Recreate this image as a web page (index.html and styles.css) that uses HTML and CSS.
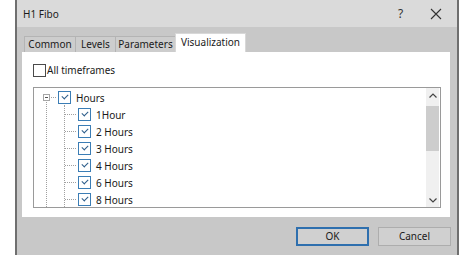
FILE: index.html
```html
<!DOCTYPE html>
<html lang="en">
<head>
    <meta charset="UTF-8">
    <title>H1 Fibo</title>
    <link rel="stylesheet" href="styles.css">
</head>
<body>
    <div class="window">
        <div class="titlebar">
            <span class="title">H1 Fibo</span>
            <span class="help">?</span>
            <span class="close">
                <svg width="12" height="12" viewBox="0 0 12 12"><path d="M1 1 L11 11 M11 1 L1 11" stroke="#333" stroke-width="1.1" fill="none"/></svg>
            </span>
        </div>
        <div class="content">
            <div class="tabs">
                <div class="tab tab-common">Common</div>
                <div class="tab tab-levels">Levels</div>
                <div class="tab tab-params">Parameters</div>
                <div class="tab tab-active">Visualization</div>
            </div>
            <div class="panel">
                <label class="check-row">
                    <span class="box"></span>
                    All timeframes
                </label>
                <div class="tree">
                    <div class="tree-items">
                        <div class="vline vline-root"></div>
                        <div class="vline vline-child"></div>
                        <div class="node node-root">
                            <span class="expander"><span class="minus"></span></span>
                            <span class="hline hline-root"></span>
                            <span class="box checked"></span>
                            <span class="node-text">Hours</span>
                        </div>
                        <div class="node node-child">
                            <span class="hline"></span>
                            <span class="box checked"></span>
                            <span class="node-text">1Hour</span>
                        </div>
                        <div class="node node-child">
                            <span class="hline"></span>
                            <span class="box checked"></span>
                            <span class="node-text">2 Hours</span>
                        </div>
                        <div class="node node-child">
                            <span class="hline"></span>
                            <span class="box checked"></span>
                            <span class="node-text">3 Hours</span>
                        </div>
                        <div class="node node-child">
                            <span class="hline"></span>
                            <span class="box checked"></span>
                            <span class="node-text">4 Hours</span>
                        </div>
                        <div class="node node-child">
                            <span class="hline"></span>
                            <span class="box checked"></span>
                            <span class="node-text">6 Hours</span>
                        </div>
                        <div class="node node-child">
                            <span class="hline"></span>
                            <span class="box checked"></span>
                            <span class="node-text">8 Hours</span>
                        </div>
                    </div>
                    <div class="scrollbar">
                        <div class="arrow">
                            <svg width="8" height="5" viewBox="0 0 8 5"><path d="M0.5 4.5 L4 1 L7.5 4.5" stroke="#444" stroke-width="1.2" fill="none"/></svg>
                        </div>
                        <div class="track">
                            <div class="thumb"></div>
                        </div>
                        <div class="arrow">
                            <svg width="8" height="5" viewBox="0 0 8 5"><path d="M0.5 0.5 L4 4 L7.5 0.5" stroke="#444" stroke-width="1.2" fill="none"/></svg>
                        </div>
                    </div>
                </div>
            </div>
            <div class="buttons">
                <div class="button button-default">OK</div>
                <div class="button">Cancel</div>
            </div>
        </div>
    </div>
</body>
</html>
```

FILE: styles.css
```css
body {
    margin: 0;
    background-color: #ffffff;
    font-family: "Noto Sans", "Open Sans", sans-serif;
    font-size: 10px;
    color: #1a1a1a;
}
.window {
    margin-left: 15px;
    width: 440px;
    height: 255px;
    border-left: 2px solid #6f6f6f;
    border-right: 2px solid #6f6f6f;
    background-color: #c8c8c8;
    overflow: hidden;
}
.titlebar {
    height: 27px;
    background-color: #dadada;
    display: flex;
    align-items: center;
    padding-left: 6px;
}
.title {
    flex: 1;
}
.help {
    width: 8px;
    font-size: 12px;
    margin-right: 24px;
    color: #333;
}
.close {
    display: flex;
    margin-right: 15px;
}
.content {
    padding: 6px 7px 0 5px;
}
.tabs {
    display: flex;
    align-items: flex-end;
    height: 19px;
    padding-left: 2px;
}
.tab {
    height: 16px;
    line-height: 14px;
    border: 1px solid #b4b4b4;
    border-bottom: none;
    margin-right: -1px;
    background-color: #cdcdcd;
    box-sizing: border-box;
    text-align: center;
    white-space: nowrap;
}
.tab-common { width: 52px; }
.tab-levels { width: 41px; }
.tab-params { width: 61px; }
.tab-active {
    width: 71px;
    height: 19px;
    line-height: 16px;
    background-color: #ffffff;
    border-color: #d8d8d8;
}
.panel {
    background-color: #ffffff;
    height: 165px;
    padding: 11px 9px 0 11px;
    box-sizing: border-box;
}
.check-row {
    display: flex;
    align-items: center;
    height: 14px;
    gap: 1px;
}
.box {
    width: 11px;
    height: 11px;
    border: 1px solid #4a4a4a;
    background-color: #ffffff;
    display: inline-block;
    flex: none;
    position: relative;
}
.box.checked {
    border-color: #3b7db5;
}
.box.checked::after {
    content: "";
    position: absolute;
    left: 3px;
    top: 2px;
    width: 5px;
    height: 3px;
    border-left: 1.2px solid #2c5d8a;
    border-bottom: 1.2px solid #2c5d8a;
    transform: rotate(-45deg);
}
.tree {
    margin-top: 10px;
    height: 121px;
    border: 1px solid #9a9a9a;
    display: flex;
    box-sizing: border-box;
}
.tree-items {
    flex: 1;
    position: relative;
    padding-top: 1px;
}
.vline {
    position: absolute;
    width: 0;
    border-left: 1px dotted #a0a0a0;
}
.vline-root {
    left: 12px;
    top: 14px;
    bottom: 0;
}
.vline-child {
    left: 30px;
    top: 17px;
    bottom: 0;
}
.node {
    height: 17px;
    display: flex;
    align-items: center;
    position: relative;
}
.node-root {
    padding-left: 9px;
}
.expander {
    width: 7px;
    height: 7px;
    border: 1px solid #a6a6a6;
    box-sizing: border-box;
    display: flex;
    align-items: center;
    justify-content: center;
    background-color: #ffffff;
}
.minus {
    width: 3px;
    height: 1px;
    background-color: #555;
}
.hline {
    width: 11px;
    border-top: 1px dotted #a0a0a0;
    margin: 0 2px 0 0;
}
.hline-root {
    width: 5px;
    margin: 0 2px 0 1px;
}
.node-child {
    padding-left: 31px;
}
.node-text {
    margin-left: 5px;
}
.scrollbar {
    width: 13px;
    margin-right: 1px;
    display: flex;
    flex-direction: column;
    background-color: #f0f0f0;
}
.arrow {
    height: 14px;
    display: flex;
    align-items: center;
    justify-content: center;
}
.track {
    flex: 1;
    padding-top: 4px;
}
.thumb {
    height: 45px;
    background-color: #cdcdcd;
}
.buttons {
    display: flex;
    justify-content: flex-end;
    gap: 9px;
    margin-top: 10px;
    margin-right: -1px;
}
.button {
    width: 73px;
    height: 19px;
    box-sizing: border-box;
    border: 1px solid #adadad;
    background-color: #d0d0d0;
    text-align: center;
    line-height: 17px;
}
.button-default {
    border: 2px solid #2e6fae;
    line-height: 15px;
}
```
